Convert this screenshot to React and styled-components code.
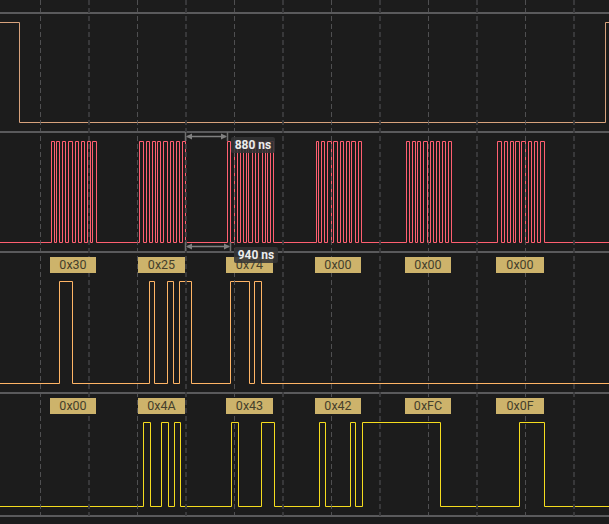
import React from "react";
import styled, { createGlobalStyle } from "styled-components";

const GlobalStyle = createGlobalStyle`
  html, body {
    margin: 0;
    background: #1c1c1c;
    overflow: hidden;
  }
`
const Scope = styled.div`
  position: relative;
  width: 609px;
  height: 524px;
  padding-top: 12px;
  box-sizing: border-box;
  background: #1c1c1c;
  font-family: Roboto, "Liberation Sans", sans-serif;
`
const TopRule = styled.div`
  height: 2px;
  background: #5a5a5c;
`
const Channel = styled.div`
  border-bottom: 2px solid #5a5a5c;
`
const Wave = styled.svg`
  display: block;
  width: 609px;
  height: ${props => props.$height}px;
`
const LabelRow = styled.div`
  display: flex;
  height: 16px;
  padding: 4px 0 0 50px;
`
const Label = styled.div`
  position: relative;
  z-index: 2;
  width: ${props => props.$width}px;
  margin-left: ${props => props.$gap}px;
  height: 16px;
  line-height: 16px;
  text-align: center;
  font-size: 12.5px;
  color: #453f2b;
  background: #cdb36b;
`
const GridLines = styled.svg`
  position: absolute;
  top: 0;
  left: 0;
  z-index: 1;
  pointer-events: none;
`
const MeasureArrow = styled.svg`
  position: absolute;
  z-index: 3;
  top: ${props => props.$top}px;
  left: 184px;
`
const Measure = styled.div`
  position: absolute;
  z-index: 4;
  top: ${props => props.$top}px;
  left: ${props => props.$left}px;
  width: 44px;
  height: 16px;
  line-height: 16px;
  text-align: center;
  font-size: 12px;
  font-weight: 700;
  color: #ececec;
  border-radius: 2px;
  background: rgba(52, 52, 54, 0.88);
`

// rising/falling edge x positions of each pulse
const clockPulses = [
    [51.5, 54.5], [56.5, 59.5], [62.5, 65.5], [68.5, 72.5], [75.5, 78.5], [81.5, 84.5], [87.5, 90.5], [92.5, 96.5],
    [139.5, 143.5], [146.5, 149.5], [152.5, 155.5], [157.5, 160.5], [163.5, 167.5], [170.5, 173.5], [176.5, 179.5], [182.5, 185.5],
    [227.5, 230.5], [234.5, 237.5], [240.5, 243.5], [246.5, 248.5], [252.5, 255.5], [258.5, 262.5], [265.5, 267.5], [270.5, 273.5],
    [316.5, 318.5], [321.5, 324.5], [327.5, 331.5], [333.5, 337.5], [340.5, 343.5], [346.5, 349.5], [351.5, 355.5], [358.5, 361.5],
    [406.5, 409.5], [412.5, 415.5], [417.5, 420.5], [423.5, 427.5], [430.5, 433.5], [436.5, 439.5], [442.5, 445.5], [448.5, 451.5],
    [497.5, 501.5], [504.5, 507.5], [510.5, 513.5], [515.5, 519.5], [521.5, 525.5], [528.5, 531.5], [534.5, 537.5], [540.5, 544.5],
]
const misoPulses = [[59.5, 72.5], [149.5, 154.5], [167.5, 173.5], [179.5, 191.5], [230.5, 249.5], [254.5, 261.5]]
const mosiPulses = [
    [143.5, 150.5], [161.5, 168.5], [174.5, 180.5], [231.5, 238.5], [261.5, 274.5],
    [319.5, 325.5], [350.5, 355.5], [362.5, 440.5], [519.5, 544.5],
]

const wavePoints = (pulses, high, low) => {
    const points = [`0,${low}`]
    pulses.forEach(([rise, fall]) => {
        points.push(`${rise},${low}`, `${rise},${high}`, `${fall},${high}`, `${fall},${low}`)
    })
    points.push(`609,${low}`)
    return points.join(' ')
}

const misoLabels = [
    { text: '0x30', width: 46, gap: 0 },
    { text: '0x25', width: 47, gap: 42 },
    { text: '0x74', width: 47, gap: 41 },
    { text: '0x00', width: 46, gap: 42 },
    { text: '0x00', width: 46, gap: 44 },
    { text: '0x00', width: 48, gap: 45 },
]
const mosiLabels = [
    { text: '0x00', width: 46, gap: 0 },
    { text: '0x4A', width: 47, gap: 42 },
    { text: '0x43', width: 47, gap: 41 },
    { text: '0x42', width: 46, gap: 42 },
    { text: '0xFC', width: 46, gap: 44 },
    { text: '0x0F', width: 48, gap: 45 },
]

const gridX = [40.5, 89, 137.5, 186, 234.5, 283, 331.5, 380, 428.5, 477, 525.5, 574]

const Labels = ({ items }) => (
    <LabelRow>
        {items.map((item, i) => (
            <Label key={i} $width={item.width} $gap={item.gap}>{item.text}</Label>
        ))}
    </LabelRow>
)

const Arrow = ({ top, width }) => (
    <MeasureArrow $top={top} width={width + 4} height="12" viewBox={`0 0 ${width + 4} 12`}>
        <path d={`M1.5 1V10M${width + 1.5} 1V10`} stroke="#6e6e6e" strokeWidth="1.5" fill="none"/>
        <path d={`M3 5.5H${width}`} stroke="#808080" strokeWidth="1.5" fill="none"/>
        <path d={`M2 5.5L8 2.5V8.5ZM${width + 1} 5.5L${width - 5} 2.5V8.5Z`} fill="#808080"/>
    </MeasureArrow>
)

const App = () => {
    return (
        <Scope>
            <GlobalStyle/>
            <TopRule/>
            <Channel>
                <Wave $height={117} viewBox="0 0 609 117">
                    <polyline
                        points="0,8.5 19.5,8.5 19.5,108.5 605.5,108.5 605.5,8.5 609,8.5"
                        fill="none" stroke="#d8a27c" strokeWidth="1"/>
                </Wave>
            </Channel>
            <Channel>
                <Wave $height={118} viewBox="0 0 609 118">
                    <polyline points={wavePoints(clockPulses, 8.5, 109.5)} fill="none" stroke="#ff5f70" strokeWidth="1"/>
                </Wave>
            </Channel>
            <Channel>
                <Labels items={misoLabels}/>
                <Wave $height={119} viewBox="0 0 609 119">
                    <polyline points={wavePoints(misoPulses, 8.5, 110.5)} fill="none" stroke="#ffb566" strokeWidth="1"/>
                </Wave>
            </Channel>
            <Channel>
                <Labels items={mosiLabels}/>
                <Wave $height={101} viewBox="0 0 609 101">
                    <polyline points={wavePoints(mosiPulses, 8.5, 92.5)} fill="none" stroke="#f5dc1e" strokeWidth="1"/>
                </Wave>
            </Channel>
            <GridLines width="609" height="516" viewBox="0 0 609 516">
                {gridX.map((x, i) => (
                    <line
                        key={x} x1={x} x2={x} y1="0" y2="516"
                        stroke={i % 2 ? "#3c3c3e" : "#58585a"}
                        strokeOpacity={i % 2 ? 0.9 : 0.85}
                        strokeWidth={i % 2 ? 2 : 1}
                        strokeDasharray="5 3"/>
                ))}
            </GridLines>
            <Arrow top={131} width={42}/>
            <Arrow top={241} width={45}/>
            <Measure $top={137} $left={231}>880 ns</Measure>
            <Measure $top={247} $left={234}>940 ns</Measure>
        </Scope>
    )
}

export default App
